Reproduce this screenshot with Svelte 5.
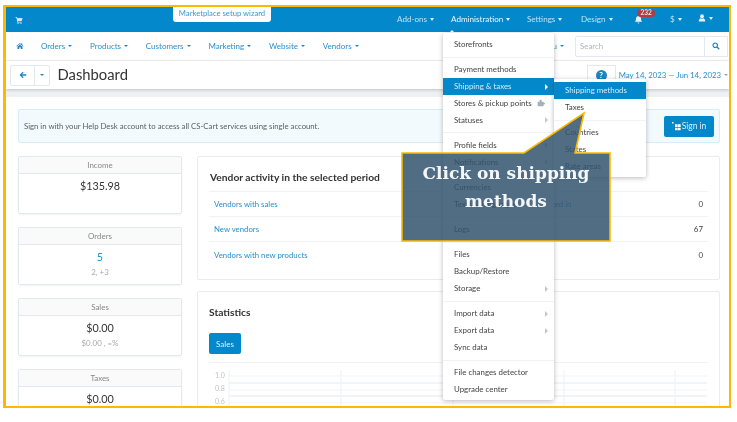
<script>
  const topLeft = ['Orders', 'Products', 'Customers', 'Marketing', 'Website', 'Vendors'];
  const cards = [
    { title: 'Income', value: '$135.98' },
    { title: 'Orders', value: '5', sub: '2, +3', link: true },
    { title: 'Sales', value: '$0.00', sub: '$0.00 , =%' },
    { title: 'Taxes', value: '$0.00' }
  ];
  const vendorRows = [
    { name: 'Vendors with sales', extra: 'Vendors not logged in', count: '0' },
    { name: 'New vendors', count: '67' },
    { name: 'Vendors with new products', count: '0' }
  ];
  const adminMenu = [
    [{ t: 'Storefronts' }],
    [{ t: 'Payment methods' }, { t: 'Shipping & taxes', sub: true, active: true }, { t: 'Stores & pickup points', addon: true }, { t: 'Statuses', sub: true }],
    [{ t: 'Profile fields', sub: true }, { t: 'Notifications', sub: true }],
    [{ t: 'Currencies' }, { t: 'Texts & languages' }],
    [{ t: 'Logs' }],
    [{ t: 'Files' }, { t: 'Backup/Restore' }, { t: 'Storage', sub: true }],
    [{ t: 'Import data', sub: true }, { t: 'Export data', sub: true }, { t: 'Sync data' }],
    [{ t: 'File changes detector' }, { t: 'Upgrade center' }]
  ];
  const shipMenu = [
    [{ t: 'Shipping methods', active: true }, { t: 'Taxes' }],
    [{ t: 'Countries' }, { t: 'States' }, { t: 'Rate areas' }]
  ];
  const hLines = [6, 13, 20, 26, 33];
  const vLines = [20, 132, 244, 355, 466];
</script>

<div class="frame">
  <header class="topbar">
    <svg class="cart" viewBox="0 0 16 16"><path d="M1 2h3l.5 2H15l-1.500 6H5.500l.3 1.500H13V13H4.500L3 3.500H1z" fill="#cfe7f5"/><circle cx="6" cy="14.500" r="1.300" fill="#cfe7f5"/><circle cx="12" cy="14.500" r="1.300" fill="#cfe7f5"/></svg>
    <div class="wizard">Marketplace setup wizard</div>
    <nav class="topnav">
      <span class="tn addons">Add-ons<i class="caret"></i></span>
      <span class="tn admin">Administration<i class="caret"></i></span>
      <span class="tn settings">Settings<i class="caret"></i></span>
      <span class="tn design">Design<i class="caret"></i></span>
      <span class="tn bell">
        <svg viewBox="0 0 16 16" width="9" height="9"><path d="M8 1a1 1 0 0 1 1 1c2.500.5 3.500 2.500 3.500 5 0 3 1 4 2 5H1.500c1-1 2-2 2-5 0-2.500 1-4.500 3.500-5a1 1 0 0 1 1-1zM6.500 13.500h3a1.500 1.500 0 0 1-3 0z" fill="#e6f3fa"/></svg>
        <b class="badge">232</b>
      </span>
      <span class="tn money">$<i class="caret"></i></span>
      <span class="tn user">
        <svg viewBox="0 0 16 16" width="8" height="8"><circle cx="8" cy="4.500" r="3.800" fill="#e6f3fa"/><path d="M1.500 15c0-4 2-6 4-6.500 1.500 1 3.500 1 5 0 2 .5 4 2.500 4 6.500z" fill="#e6f3fa"/></svg>
        <i class="caret"></i>
      </span>
    </nav>
  </header>

  <div class="navrow">
    <svg class="home" viewBox="0 0 16 16"><path d="M8 2 .8 8.200l.9 1L8 3.900l6.300 5.300.9-1-2.700-2.300V2.500h-2v2.600zM3 9.500V14h3.500v-3.500h3V14H13V9.500L8 5.300z" fill="#1a85c6"/></svg>
    <div class="mainlinks">
      {#each topLeft as link}
        <span class="ml">{link}<i class="caret small"></i></span>
      {/each}
    </div>
    <span class="menulink">Menu<i class="caret small"></i></span>
    <div class="search">
      <span class="input">Search</span>
      <span class="searchbtn">
        <svg viewBox="0 0 16 16" width="8" height="8"><circle cx="6.500" cy="6.500" r="4.500" fill="none" stroke="#1a85c6" stroke-width="2.400"/><path d="m10 10 4.500 4.500" stroke="#1a85c6" stroke-width="2.600"/></svg>
      </span>
    </div>
  </div>

  <div class="toolbar">
    <div class="backgroup">
      <span class="back">
        <svg viewBox="0 0 16 16" width="8" height="8"><path d="M7.500 1.500 1 8l6.500 6.500 1.800-1.800L6 9.500h8.500v-3H6l3.300-3.200z" fill="#1a85c6"/></svg>
      </span>
      <span class="backcaret"><i class="caret small"></i></span>
    </div>
    <h1>Dashboard</h1>
    <span class="helpbtn"><b>?</b></span>
    <span class="dates">May 14, 2023 — Jun 14, 2023<i class="caret small grey"></i></span>
  </div>

  <div class="band"></div>

  <main class="content">
    <div class="notice">
      <span>Sign in with your Help Desk account to access all CS-Cart services using single account.</span>
      <button class="signin">
        <svg viewBox="0 0 12 12" width="9" height="9"><path d="M0 0h2v2H0zM4 3h3.500v3.500H4zM8 3h3.500v3.500H8zM4 7.500h3.500V11H4zM8 7.500h3.500V11H8z" fill="#fff"/></svg>
        Sign in
      </button>
    </div>

    <div class="columns">
      <aside class="cards">
        {#each cards as card}
          <section class="card">
            <div class="cardhead">{card.title}</div>
            <div class="value" class:link={card.link}>{card.value}</div>
            {#if card.sub}<div class="sub">{card.sub}</div>{/if}
          </section>
        {/each}
      </aside>

      <div class="panels">
        <section class="panel vendors">
          <h2>Vendor activity in the selected period</h2>
          {#each vendorRows as row}
            <div class="vrow">
              <a href="#top" class="vname">{row.name}</a>
              {#if row.extra}<a href="#top" class="vextra">{row.extra}</a>{/if}
              <span class="vcount">{row.count}</span>
            </div>
          {/each}
        </section>

        <section class="panel stats">
          <h2>Statistics</h2>
          <button class="salesbtn">Sales</button>
          <div class="chart">
            <svg width="498" height="40">
              {#each hLines as y, i}
                <line x1="20" x2="498" y1={y} y2={y} stroke={i % 2 ? '#e4e8ee' : '#f2f4f7'} />
              {/each}
              {#each vLines as x}
                <line x1={x} x2={x} y1="0" y2="40" stroke="#eef1f5" />
              {/each}
            </svg>
            <span class="tick t1">1.0</span>
            <span class="tick t2">0.8</span>
            <span class="tick t3">0.6</span>
          </div>
        </section>
      </div>
    </div>
  </main>

  <i class="menutip"></i>
  <div class="menu adminmenu">
    {#each adminMenu as group, g}
      {#if g > 0}<div class="divider"></div>{/if}
      {#each group as item}
        <div class="item" class:active={item.active}>
          {item.t}
          {#if item.addon}
            <svg class="addon" viewBox="0 0 12 12" width="8" height="8"><path d="M4 1h3v3h3v2h2v2h-2v3H1V4h3z" fill="#a9b0b6"/></svg>
          {/if}
          {#if item.sub}<i class="arrow"></i>{/if}
        </div>
      {/each}
    {/each}
  </div>

  <div class="menu shipmenu">
    {#each shipMenu as group, g}
      {#if g > 0}<div class="divider"></div>{/if}
      {#each group as item}
        <div class="item" class:active={item.active}>{item.t}</div>
      {/each}
    {/each}
  </div>

  <div class="callout">
    <svg class="bubble" width="216" height="136" viewBox="0 0 216 136">
      <polygon points="4,44 126,44 186,4 177,44 212,44 212,132 4,132" fill="rgba(51,83,109,.85)" stroke="#fdb900" stroke-width="1.600" />
    </svg>
    <p>Click on shipping methods</p>
  </div>
</div>

<style>
  :global(body) {
    background: #fff;
  }

  .frame {
    position: relative;
    box-sizing: border-box;
    width: 728px;
    height: 403px;
    margin: 5px 0 0 3px;
    border: 2px solid #fdb900;
    border-left-width: 3px;
    overflow: hidden;
    background: #fff;
    font-family: Lato, "Noto Sans", sans-serif;
    font-size: 7.900px;
    color: #444;
    filter: blur(.25px);
  }

  .topbar {
    position: relative;
    height: 25px;
    background: #0388cc;
    display: flex;
    align-items: center;
    padding-left: 9px;
  }

  .cart {
    width: 8px;
    height: 8px;
  }

  .wizard {
    position: absolute;
    left: 167px;
    top: 0;
    width: 98px;
    height: 15px;
    background: #fff;
    border-radius: 0 0 3px 3px;
    color: #3a9bd5;
    font-size: 7.700px;
    line-height: 13px;
    text-align: center;
  }

  .topnav {
    margin-left: auto;
    height: 100%;
    position: relative;
    width: 345px;
  }

  .tn {
    position: absolute;
    top: 7px;
    color: #bfe0f2;
    font-size: 8.100px;
    line-height: 11px;
    white-space: nowrap;
    display: flex;
    align-items: center;
  }

  .addons { left: 13px; }
  .admin { left: 67px; color: #eef7fc; }
  .settings { left: 143px; }
  .design { left: 197px; }
  .bell { left: 250px; top: 8px; }
  .money { left: 286px; }
  .user { left: 314px; }

  .badge {
    position: absolute;
    left: 3px;
    top: -6px;
    background: #b33c42;
    color: #f5e3e3;
    border-radius: 5px;
    font-size: 6.500px;
    line-height: 8px;
    padding: 0 3.500px;
  }

  .caret {
    display: inline-block;
    margin-left: 3px;
    border-left: 2.500px solid transparent;
    border-right: 2.500px solid transparent;
    border-top: 3px solid #e6f3fa;
  }

  .caret.small {
    border-left-width: 2px;
    border-right-width: 2px;
    border-top: 2.500px solid #1a85c6;
  }

  .caret.small.grey {
    border-top-color: #9aa3aa;
  }

  .navrow {
    height: 29px;
    display: flex;
    align-items: center;
    padding-left: 10px;
    border-bottom: 1px solid #f0f2f4;
    box-sizing: border-box;
  }

  .home {
    width: 8px;
    height: 8px;
  }

  .mainlinks {
    display: flex;
    margin-left: 17px;
    gap: 17.800px;
  }

  .ml, .menulink {
    color: #2a8fcb;
    font-size: 8px;
    white-space: nowrap;
    display: flex;
    align-items: center;
  }

  .menulink {
    margin-left: auto;
    margin-right: 11px;
  }

  .search {
    display: flex;
    height: 21px;
    margin-right: 1px;
  }

  .input {
    box-sizing: border-box;
    width: 130px;
    border: 1px solid #e3e8ee;
    border-radius: 2px 0 0 2px;
    padding: 0 4px;
    line-height: 19px;
    color: #b0b5ba;
  }

  .searchbtn {
    box-sizing: border-box;
    width: 23px;
    border: 1px solid #e3e8ee;
    border-left: 0;
    display: flex;
    align-items: center;
    justify-content: center;
  }

  .toolbar {
    position: relative;
    z-index: 1;
    height: 28px;
    display: flex;
    align-items: center;
    padding-left: 4px;
    background: #fff;
    box-shadow: 0 1px 3px rgba(0, 0, 0, .2);
  }

  .backgroup {
    display: flex;
    height: 21px;
    border: 1px solid #e3e8ee;
    border-radius: 2px;
    box-sizing: border-box;
  }

  .back, .backcaret {
    display: flex;
    align-items: center;
    justify-content: center;
  }

  .back {
    width: 23px;
    border-right: 1px solid #e3e8ee;
  }

  .backcaret {
    width: 14px;
  }

  .backcaret .caret {
    margin-left: 0;
  }

  h1 {
    margin: -2px 0 0 7.500px;
    font-size: 14.800px;
    font-weight: 400;
    color: #333;
  }

  .helpbtn {
    margin-left: auto;
    box-sizing: border-box;
    width: 29px;
    height: 21px;
    border: 1px solid #e3e8ee;
    display: flex;
    justify-content: center;
  }

  .helpbtn b {
    width: 11px;
    height: 11px;
    margin-top: 4px;
    border-radius: 50%;
    background: #1a85c6;
    color: #fff;
    font-size: 8px;
    line-height: 11px;
    text-align: center;
  }

  .dates {
    margin: 0 1px 0 3px;
    color: #2a8fcb;
    font-size: 7.800px;
    white-space: nowrap;
    display: flex;
    align-items: center;
  }

  .band {
    height: 8px;
    background: #eef1f3;
  }

  .content {
    padding: 12px 9px 0 12px;
  }

  .notice {
    box-sizing: border-box;
    height: 34px;
    background: #f3fafe;
    border: 1px solid #d8ecf7;
    border-radius: 2px;
    display: flex;
    align-items: center;
    justify-content: space-between;
    padding: 0 5px;
    font-size: 7.750px;
    color: #5a6066;
  }

  .signin {
    width: 50px;
    height: 21px;
    border: 0;
    border-radius: 2px;
    background: #0388cc;
    color: #dff0fa;
    font: inherit;
    font-size: 8.500px;
    display: flex;
    align-items: center;
    justify-content: center;
    gap: 1px;
    padding: 0;
  }

  .columns {
    display: flex;
    gap: 15px;
    margin-top: 13px;
  }

  .cards {
    width: 164px;
    flex: none;
    display: flex;
    flex-direction: column;
    gap: 13px;
  }

  .card {
    box-sizing: border-box;
    height: 58px;
    border: 1px solid #e3e8f0;
    border-radius: 2px;
    box-shadow: 0 1px 2px rgba(0, 0, 0, .05);
    text-align: center;
  }

  .cardhead {
    height: 17px;
    line-height: 16px;
    background: #fafafa;
    border-bottom: 1px solid #e3e8f0;
    box-sizing: border-box;
    color: #888;
    font-size: 7.900px;
  }

  .value {
    margin-top: 4px;
    font-size: 10.800px;
    line-height: 16px;
    color: #333;
  }

  .value.link {
    color: #2a8fcb;
  }

  .sub {
    margin-top: 1px;
    color: #aaa;
    line-height: 12px;
  }

  .panels {
    flex: 1;
    display: flex;
    flex-direction: column;
    gap: 11px;
  }

  .panel {
    box-sizing: border-box;
    border: 1px solid #e8ecf2;
    border-radius: 2px;
    padding: 0 11px;
  }

  .vendors {
    height: 124px;
  }

  h2 {
    margin: 0;
    font-size: 10.250px;
    font-weight: 700;
    color: #333;
    line-height: 14px;
    white-space: nowrap;
  }

  .vendors h2 {
    padding: 13px 0 7px 1px;
    border-bottom: 1px solid #f0f2f5;
  }

  .vrow {
    position: relative;
    height: 25px;
    padding: 0 5px;
    display: flex;
    align-items: center;
    border-bottom: 1px solid #f0f2f5;
    box-sizing: border-box;
    color: #444;
  }

  .vrow:last-child {
    border-bottom: 0;
  }

  .vname, .vextra {
    color: #2a8fcb;
    text-decoration: none;
    font-size: 7.800px;
  }

  .vextra {
    margin-left: auto;
    margin-right: 127px;
  }

  .vcount {
    margin-left: auto;
  }

  .vextra + .vcount {
    margin-left: 0;
  }

  .stats {
    height: 130px;
  }

  .stats h2 {
    padding-top: 13px;
  }

  .salesbtn {
    display: block;
    margin-top: 14px;
    width: 32px;
    height: 21px;
    border: 0;
    border-radius: 2px;
    background: #0388cc;
    color: #dff0fa;
    font: inherit;
    font-size: 8px;
    padding: 0;
  }

  .chart {
    position: relative;
    margin-top: 8px;
    padding-top: 7px;
    border-top: 1px solid #f0f2f5;
    height: 40px;
  }

  .tick {
    position: absolute;
    left: 6px;
    color: #bcc3cc;
    font-size: 7px;
    line-height: 8px;
  }

  .t1 { top: 8px; }
  .t2 { top: 21px; }
  .t3 { top: 34px; }

  .menutip {
    position: absolute;
    left: 443px;
    top: 23px;
    border-left: 3px solid transparent;
    border-right: 3px solid transparent;
    border-bottom: 3px solid #fff;
    z-index: 3;
  }

  .menu {
    position: absolute;
    z-index: 3;
    box-sizing: border-box;
    background: #fff;
    border-radius: 2px;
    box-shadow: 0 1px 5px rgba(0, 0, 0, .28);
  }

  .adminmenu {
    left: 437px;
    top: 26px;
    width: 111px;
    height: 367px;
    padding-top: 3px;
  }

  .shipmenu {
    left: 548px;
    top: 72px;
    width: 92px;
    height: 98px;
    padding-top: 3px;
  }

  .item {
    position: relative;
    height: 16.800px;
    line-height: 16.800px;
    padding-left: 11px;
    color: #444;
    font-size: 7.900px;
    white-space: nowrap;
  }

  .item.active {
    background: #0388cc;
    color: #d5ebf8;
  }

  .divider {
    height: 1px;
    margin: 4px 0 3.500px;
    background: #f0f2f4;
  }

  .arrow {
    position: absolute;
    right: 6px;
    top: 5.500px;
    border-top: 3px solid transparent;
    border-bottom: 3px solid transparent;
    border-left: 3px solid #c3c8cc;
  }

  .active .arrow {
    border-left-color: #fff;
  }

  .addon {
    position: absolute;
    right: 9px;
    top: 4px;
  }

  .callout {
    position: absolute;
    z-index: 4;
    left: 392px;
    top: 102px;
    width: 216px;
    height: 136px;
  }

  .bubble {
    position: absolute;
    left: 0;
    top: 0;
  }

  .callout p {
    position: relative;
    box-sizing: border-box;
    width: 216px;
    margin: 0;
    padding: 50px 20px 0;
    font-family: "DejaVu Serif", serif;
    font-weight: 700;
    font-size: 17px;
    line-height: 28px;
    color: #f4f6f8;
    text-align: center;
  }
</style>
